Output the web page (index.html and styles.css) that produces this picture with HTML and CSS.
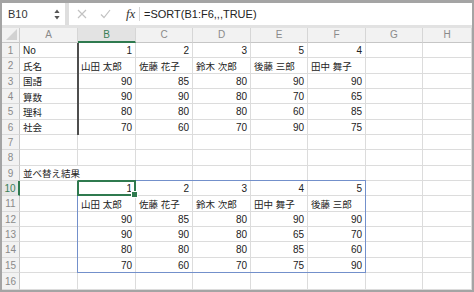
FILE: index.html
```html
<!DOCTYPE html>
<html lang="ja">
<head>
<meta charset="utf-8">
<title>SORT</title>
<link rel="stylesheet" href="styles.css">
</head>
<body>
<div class="app">
  <div class="fbar">
    <div class="namebox">
      <span class="ref">B10</span>
      <svg class="spin" width="6" height="11" viewBox="0 0 6 11"><path d="M3 0.5 L5.6 4 L0.4 4 Z" fill="#555"/><path d="M3 10.5 L5.6 7 L0.4 7 Z" fill="#555"/></svg>
    </div>
    <div class="fgap"></div>
    <div class="fmain">
      <div class="ficons">
        <svg width="10" height="10" viewBox="0 0 10 10"><path d="M1 1 L9 9 M9 1 L1 9" stroke="#c2c2c2" stroke-width="1.2" fill="none"/></svg>
        <svg width="11" height="10" viewBox="0 0 11 10"><path d="M1 5.5 L4 8.5 L10 1" stroke="#c2c2c2" stroke-width="1.2" fill="none"/></svg>
        <span class="fx">fx</span>
      </div>
      <div class="fdiv"></div>
      <div class="formula">=SORT(B1:F6,,,TRUE)</div>
    </div>
  </div>
  <div class="hsep"></div>
  <div class="sheet">
    <div class="cells">
      <div class="corner"><svg width="11" height="11" viewBox="0 0 11 11"><path d="M11 0 L11 11 L0 11 Z" fill="#d2d2d2"/></svg></div>
      <div class="ch">A</div><div class="ch sel">B</div><div class="ch">C</div><div class="ch">D</div><div class="ch">E</div><div class="ch">F</div><div class="ch">G</div><div class="ch">H</div>

      <div class="rh">1</div><div class="c">No</div><div class="c n">1</div><div class="c n">2</div><div class="c n">3</div><div class="c n">5</div><div class="c n">4</div><div class="c"></div><div class="c"></div>
      <div class="rh">2</div><div class="c j">氏名</div><div class="c j">山田 太郎</div><div class="c j">佐藤 花子</div><div class="c j">鈴木 次郎</div><div class="c j">後藤 三郎</div><div class="c j">田中 舞子</div><div class="c"></div><div class="c"></div>
      <div class="rh">3</div><div class="c j">国語</div><div class="c n">90</div><div class="c n">85</div><div class="c n">80</div><div class="c n">90</div><div class="c n">90</div><div class="c"></div><div class="c"></div>
      <div class="rh">4</div><div class="c j">算数</div><div class="c n">90</div><div class="c n">90</div><div class="c n">80</div><div class="c n">70</div><div class="c n">65</div><div class="c"></div><div class="c"></div>
      <div class="rh">5</div><div class="c j">理科</div><div class="c n">80</div><div class="c n">80</div><div class="c n">80</div><div class="c n">60</div><div class="c n">85</div><div class="c"></div><div class="c"></div>
      <div class="rh">6</div><div class="c j">社会</div><div class="c n">70</div><div class="c n">60</div><div class="c n">70</div><div class="c n">90</div><div class="c n">75</div><div class="c"></div><div class="c"></div>
      <div class="rh">7</div><div class="c"></div><div class="c"></div><div class="c"></div><div class="c"></div><div class="c"></div><div class="c"></div><div class="c"></div><div class="c"></div>
      <div class="rh">8</div><div class="c"></div><div class="c"></div><div class="c"></div><div class="c"></div><div class="c"></div><div class="c"></div><div class="c"></div><div class="c"></div>
      <div class="rh">9</div><div class="c j over">並べ替え結果</div><div class="c nb"></div><div class="c"></div><div class="c"></div><div class="c"></div><div class="c"></div><div class="c"></div><div class="c"></div>
      <div class="rh rsel">10</div><div class="c"></div><div class="c n">1</div><div class="c n">2</div><div class="c n">3</div><div class="c n">4</div><div class="c n">5</div><div class="c"></div><div class="c"></div>
      <div class="rh">11</div><div class="c"></div><div class="c j">山田 太郎</div><div class="c j">佐藤 花子</div><div class="c j">鈴木 次郎</div><div class="c j">田中 舞子</div><div class="c j">後藤 三郎</div><div class="c"></div><div class="c"></div>
      <div class="rh">12</div><div class="c"></div><div class="c n">90</div><div class="c n">85</div><div class="c n">80</div><div class="c n">90</div><div class="c n">90</div><div class="c"></div><div class="c"></div>
      <div class="rh">13</div><div class="c"></div><div class="c n">90</div><div class="c n">90</div><div class="c n">80</div><div class="c n">65</div><div class="c n">70</div><div class="c"></div><div class="c"></div>
      <div class="rh">14</div><div class="c"></div><div class="c n">80</div><div class="c n">80</div><div class="c n">80</div><div class="c n">85</div><div class="c n">60</div><div class="c"></div><div class="c"></div>
      <div class="rh">15</div><div class="c"></div><div class="c n">70</div><div class="c n">60</div><div class="c n">70</div><div class="c n">75</div><div class="c n">90</div><div class="c"></div><div class="c"></div>
      <div class="rh">16</div><div class="c"></div><div class="c"></div><div class="c"></div><div class="c"></div><div class="c"></div><div class="c"></div><div class="c"></div><div class="c"></div>
    </div>
    <div class="marks">
      <div class="colmark"></div>
      <div class="spill"></div>
      <div class="active"></div>
    </div>
  </div>
</div>
</body>
</html>
```

FILE: styles.css
```css
* { box-sizing: border-box; }
html, body { margin: 0; padding: 0; }
body {
  width: 474px;
  height: 292px;
  overflow: hidden;
  background: #a4a4a4;
  font-family: "Liberation Sans", "Noto Sans CJK JP", sans-serif;
  color: #222;
}
.app {
  margin: 3px 2px 2px 2px;
  height: 287px;
  display: flex;
  flex-direction: column;
  background: #fff;
}
.fbar {
  height: 22px;
  display: flex;
  background: #fff;
}
.namebox {
  width: 63px;
  display: flex;
  align-items: center;
  justify-content: space-between;
  padding: 0 5px 0 6px;
}
.ref { font-size: 11px; color: #333; }
.fgap { width: 4px; background: #dedede; }
.fmain { flex: 1; display: flex; align-items: center; }
.ficons {
  width: 70px;
  display: flex;
  align-items: center;
  gap: 13px;
  padding-left: 8px;
}
.fx {
  font-family: "Liberation Serif", serif;
  font-style: italic;
  font-size: 13px;
  color: #333;
  margin-left: 2px;
}
.fdiv { width: 1px; height: 14px; background: #d4d4d4; }
.formula { padding-left: 4px; font-size: 11px; color: #222; }
.hsep { height: 3px; background: #e2e2e2; }

.sheet { flex: 1; display: grid; min-height: 0; }
.cells, .marks {
  grid-area: 1 / 1;
  display: grid;
  grid-template-columns: 18px 58px 58px 57px 58px 57px 58px 57px 1fr;
  grid-template-rows: 15px repeat(15, 15.333px) 1fr;
}
.marks { pointer-events: none; }

.corner {
  background: #f2f2f2;
  border-right: 1px solid #cdcdcd;
  border-bottom: 1px solid #c6c6c6;
  display: flex;
  align-items: flex-end;
  justify-content: flex-end;
  padding: 0 2px 2px 0;
}
.ch {
  background: #f2f2f2;
  border-right: 1px solid #d6d6d6;
  border-bottom: 1px solid #c6c6c6;
  font-size: 10px;
  color: #8a8a8a;
  text-align: center;
  line-height: 14px;
}
.ch.sel {
  background: #e3e3e3;
  color: #3a7f57;
  border-bottom: 2px solid #2f7a4f;
}
.rh {
  background: #f2f2f2;
  border-right: 1px solid #c6c6c6;
  border-bottom: 1px solid #dadada;
  font-size: 10px;
  color: #8a8a8a;
  text-align: center;
  display: flex;
  align-items: center;
  justify-content: center;
  padding-top: 1px;
}
.rh.rsel {
  background: #e6e6e6;
  color: #3a7f57;
  border-right: 2px solid #2f7a4f;
}
.c {
  border-right: 1px solid #dcdcdc;
  border-bottom: 1px solid #dcdcdc;
  font-size: 10px;
  padding: 1px 3px 0 3px;
  display: flex;
  align-items: center;
  white-space: nowrap;
  overflow: hidden;
  color: #222;
}
.c.n { justify-content: flex-end; }
.c.j { font-size: 9.5px; }
.c.over { overflow: visible; border-right-color: transparent; position: relative; z-index: 1; }

.colmark {
  grid-column: 3;
  grid-row: 2 / 8;
  border-left: 2px solid #4e4e4e;
  margin-left: -1px;
}
.spill {
  grid-column: 3 / 8;
  grid-row: 11 / 17;
  border: 1px solid #7390cb;
  margin: -1px 0 0 -1px;
}
.active {
  grid-column: 3;
  grid-row: 11;
  border: 2px solid #2f7a4f;
  margin: -1px 0 0 -1px;
  position: relative;
}
.active::after {
  content: "";
  position: absolute;
  right: -4px;
  bottom: -4px;
  width: 5px;
  height: 5px;
  background: #2f7a4f;
  border: 1px solid #fff;
}
```
